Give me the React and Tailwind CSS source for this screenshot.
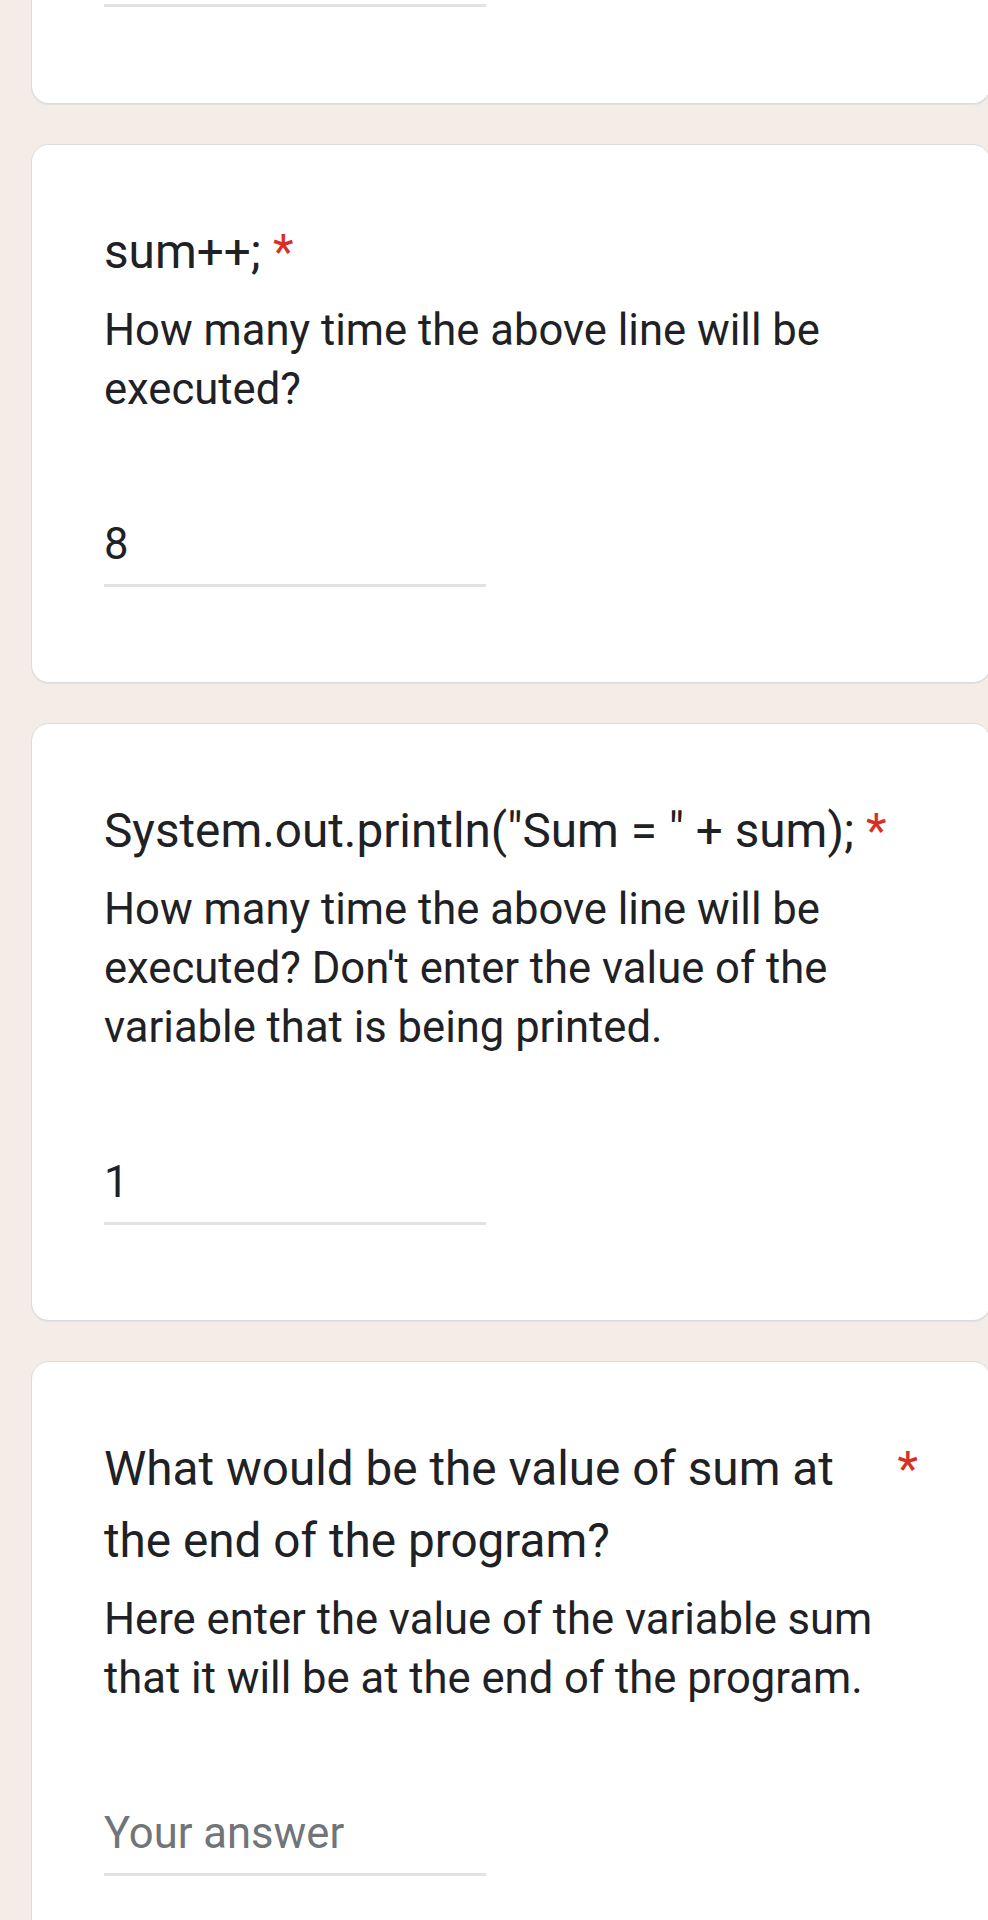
import React from 'react';

const questions = [
  {
    title: 'sum++;',
    description: 'How many time the above line will be executed?',
    answer: '8',
  },
  {
    title: 'System.out.println("Sum = " + sum);',
    description:
      "How many time the above line will be executed? Don't enter the value of the variable that is being printed.",
    answer: '1',
  },
  {
    title: 'What would be the value of sum at the end of the program?',
    description:
      'Here enter the value of the variable sum that it will be at the end of the program.',
    answer: '',
  },
];

function Underline() {
  return <div className="h-[3px] w-[382px] bg-[#e2e2e2]" />;
}

function QuestionCard({ title, description, answer }) {
  return (
    <div className="w-[960px] shrink-0 rounded-[18px] border border-[#dadce0] bg-white px-[72px] pt-[71px] pb-[95px] shadow-[0_1px_1px_rgba(0,0,0,0.06)]">
      <div className="flex items-start text-[47.7px] leading-[72px]">
        <span className="min-w-0">{title}</span>
        <span className="shrink-0 pl-[12px] text-[#d93025]">*</span>
      </div>
      <p className="mt-[13px] text-[43.6px] leading-[59px]">{description}</p>
      <div className="mt-[96px] h-[59px] text-[43.6px] leading-[59px]">
        {answer ? answer : <span className="text-[#70757a]">Your answer</span>}
      </div>
      <div className="mt-[10px]">
        <Underline />
      </div>
    </div>
  );
}

export default function App() {
  return (
    <div className="h-[1920px] w-[988px] overflow-hidden bg-[#f3ece7] font-['Roboto',sans-serif] text-[#202124]">
      <div className="flex flex-col gap-[40px] pl-[31px]">
        {/* previous question, only its lower edge is visible */}
        <div className="w-[960px] shrink-0 rounded-b-[18px] border-x border-b border-[#dadce0] bg-white pl-[72px] pt-[4px] pb-[96px] shadow-[0_1px_1px_rgba(0,0,0,0.06)]">
          <Underline />
        </div>
        {questions.map((q) => (
          <QuestionCard key={q.title} {...q} />
        ))}
      </div>
    </div>
  );
}
